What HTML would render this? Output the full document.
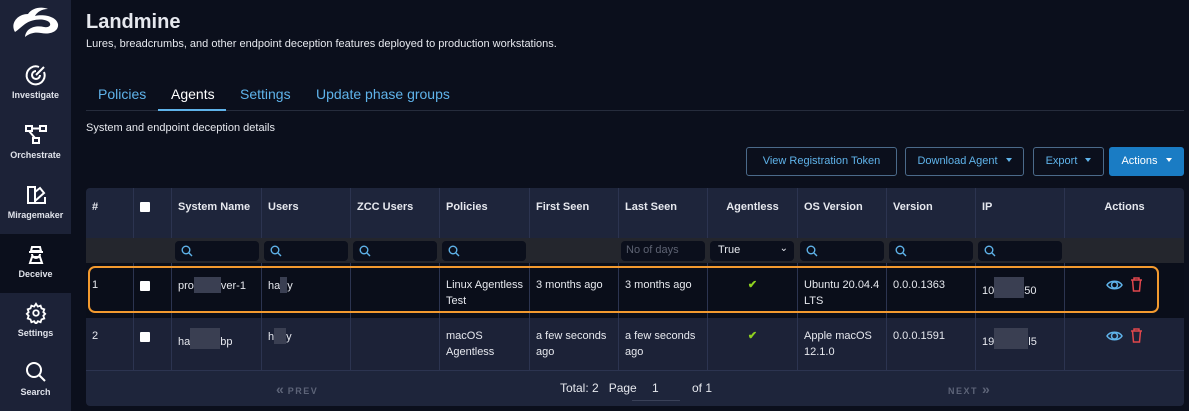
<!DOCTYPE html>
<html><head><meta charset="utf-8"><style>
*{box-sizing:border-box;margin:0;padding:0}
body{width:1189px;height:411px;background:#0b0f1c;font-family:"Liberation Sans",sans-serif;color:#e6e8ee;position:relative;overflow:hidden}
.sb{position:absolute;left:0;top:0;width:71px;height:411px;background:#1c2237}
.it{position:absolute;left:0;width:71px;text-align:center;font-size:9px;font-weight:bold;color:#dfe2ea}
.it svg{display:block;margin:0 auto 4px}
.abs{position:absolute}
.tab{position:absolute;top:86px;font-size:14px;color:#5fb3ea}
.btn{position:absolute;top:147px;height:29px;border:1px solid #4b6a8a;border-radius:3px;color:#5fb3ea;font-size:11px;line-height:27px;text-align:center;background:#0b0f1c}
.car{display:inline-block;width:0;height:0;border-left:3px solid transparent;border-right:3px solid transparent;border-top:4px solid currentColor;margin-left:8px;vertical-align:2px}
.tbl{position:absolute;left:86px;top:188px;width:1098px;height:218px;background:#1e253b;border-radius:4px;overflow:hidden}
.r{position:absolute;left:0;width:1098px}
.c{position:absolute;top:0;height:100%;border-right:1px solid #2c3450;font-size:11px;padding:0 6px;line-height:16px}
.hd .c{font-weight:bold;padding-top:11px}
.f{position:absolute;top:3px;height:20px;background:#0b0f1c;border-radius:4px}
.mask{display:inline-block;background:#3a3f52;height:16px;vertical-align:-4px}
.chk{position:absolute;width:10px;height:10px;background:#fff;border-radius:1px}
</style></head><body>
<div class="sb">
 <svg class="abs" style="left:11px;top:6px" width="50" height="32" viewBox="0 0 50 32"><path d="M4 26 C-1 18 6 8 17 8 C21 2 30 0 37 3 C31 3 26 6 24 10 C32 8 45 10 47 18 C48 25 40 29 30 27 C24 26 19 27 14 31 C15 22 24 19 33 21 C38 22 41 19 38 16 C33 12 21 13 14 18 C10 21 7 24 4 26Z" fill="#fff"/></svg>
 <div class="it" style="top:64px"><svg width="22" height="22" viewBox="0 0 22 22" fill="none" stroke="#fff" stroke-width="2"><path d="M19 8a9 9 0 1 1-5-5"/><path d="M15 11a4 4 0 1 1-4-4"/><path d="M11 11l8-8"/></svg>Investigate</div>
 <div class="it" style="top:124px"><svg width="24" height="22" viewBox="0 0 24 22" fill="none" stroke="#fff" stroke-width="2"><rect x="2" y="2" width="6" height="5"/><rect x="16" y="2" width="6" height="5"/><rect x="9" y="14" width="6" height="5"/><path d="M8 4.5h8M5 7l6 7"/></svg>Orchestrate</div>
 <div class="it" style="top:184px"><svg width="22" height="22" viewBox="0 0 22 22" fill="none" stroke="#fff" stroke-width="2"><rect x="3" y="3" width="7" height="16"/><path d="M10 8l5-4 4 5-9 8M10 19h10v-6"/></svg>Miragemaker</div>
 <div class="abs" style="left:0;top:234px;width:71px;height:59px;background:#0b0f1c"></div>
 <div class="it" style="top:243px"><svg width="22" height="22" viewBox="0 0 22 22" fill="none" stroke="#fff" stroke-width="2"><path d="M7 4h8l1 4H6zM4 9h14M7 11a4 4 0 0 0 8 0M5 20l2-6h8l2 6z"/></svg>Deceive</div>
 <div class="it" style="top:302px"><svg width="22" height="22" viewBox="0 0 24 24" fill="none" stroke="#fff" stroke-width="2"><circle cx="12" cy="12" r="3"/><path d="M12 2l2 3 3-1 1 3 3 1-1 3 2 2-2 2 1 3-3 1-1 3-3-1-2 3-2-3-3 1-1-3-3-1 1-3-2-2 2-2-1-3 3-1 1-3 3 1z"/></svg>Settings</div>
 <div class="it" style="top:361px"><svg width="22" height="22" viewBox="0 0 22 22" fill="none" stroke="#fff" stroke-width="2"><circle cx="9" cy="9" r="7"/><path d="M14 14l6 6"/></svg>Search</div>
</div>
<div class="abs" style="left:86px;top:11px;font-size:20px;font-weight:bold">Landmine</div>
<div class="abs" style="left:86px;top:38px;font-size:11px">Lures, breadcrumbs, and other endpoint deception features deployed to production workstations.</div>
<div class="tab" style="left:98px">Policies</div>
<div class="tab" style="left:171px;color:#fff">Agents</div>
<div class="tab" style="left:240px">Settings</div>
<div class="tab" style="left:316px">Update phase groups</div>
<div class="abs" style="left:86px;top:110px;width:1098px;height:1px;background:#262c3c"></div>
<div class="abs" style="left:158px;top:109px;width:68px;height:2px;background:#5fb3ea"></div>
<div class="abs" style="left:86px;top:122px;font-size:11px">System and endpoint deception details</div>
<div class="btn" style="left:746px;width:151px">View Registration Token</div>
<div class="btn" style="left:905px;width:119px">Download Agent<span class="car"></span></div>
<div class="btn" style="left:1033px;width:71px">Export<span class="car"></span></div>
<div class="btn" style="left:1109px;width:75px;background:#1a7cc4;border-color:#1a7cc4;color:#fff">Actions<span class="car"></span></div>

<div class="tbl">
 <div class="r hd" style="top:0;height:50px">
  <div class="c" style="left:0;width:48px">#</div>
  <div class="c" style="left:48px;width:38px"><span class="chk" style="left:6px;top:14px"></span></div>
  <div class="c" style="left:86px;width:90px">System Name</div>
  <div class="c" style="left:176px;width:89px">Users</div>
  <div class="c" style="left:265px;width:89px">ZCC Users</div>
  <div class="c" style="left:354px;width:90px">Policies</div>
  <div class="c" style="left:444px;width:89px">First Seen</div>
  <div class="c" style="left:533px;width:89px">Last Seen</div>
  <div class="c" style="left:622px;width:90px;text-align:center">Agentless</div>
  <div class="c" style="left:712px;width:89px">OS Version</div>
  <div class="c" style="left:801px;width:89px">Version</div>
  <div class="c" style="left:890px;width:89px">IP</div>
  <div class="c" style="left:979px;width:119px;text-align:center;border:0">Actions</div>
 </div>
 <div class="r" style="top:50px;height:25px;background:#24262d">
  <div class="f" style="left:89px;width:84px"></div><div class="f" style="left:178px;width:84px"></div><div class="f" style="left:267px;width:84px"></div><div class="f" style="left:356px;width:84px"></div>
  <div class="f" style="left:535px;width:84px;font-size:11px;color:#5d6272;padding:3px 5px">No of days</div>
  <div class="f" style="left:624px;width:84px;font-size:11px;padding:3px 8px">True<span style="position:absolute;right:6px;top:2px;font-size:10px">⌄</span></div>
  <div class="f" style="left:714px;width:84px"></div><div class="f" style="left:803px;width:84px"></div><div class="f" style="left:892px;width:84px"></div>
  <svg class="abs" style="left:95px;top:7px" width="12" height="12"><circle cx="5" cy="5" r="3.8" fill="none" stroke="#5fb3ea" stroke-width="1.4"/><path d="M8 8l3 3" stroke="#5fb3ea" stroke-width="1.4"/></svg>
  <svg class="abs" style="left:184px;top:7px" width="12" height="12"><circle cx="5" cy="5" r="3.8" fill="none" stroke="#5fb3ea" stroke-width="1.4"/><path d="M8 8l3 3" stroke="#5fb3ea" stroke-width="1.4"/></svg>
  <svg class="abs" style="left:273px;top:7px" width="12" height="12"><circle cx="5" cy="5" r="3.8" fill="none" stroke="#5fb3ea" stroke-width="1.4"/><path d="M8 8l3 3" stroke="#5fb3ea" stroke-width="1.4"/></svg>
  <svg class="abs" style="left:362px;top:7px" width="12" height="12"><circle cx="5" cy="5" r="3.8" fill="none" stroke="#5fb3ea" stroke-width="1.4"/><path d="M8 8l3 3" stroke="#5fb3ea" stroke-width="1.4"/></svg>
  <svg class="abs" style="left:720px;top:7px" width="12" height="12"><circle cx="5" cy="5" r="3.8" fill="none" stroke="#5fb3ea" stroke-width="1.4"/><path d="M8 8l3 3" stroke="#5fb3ea" stroke-width="1.4"/></svg>
  <svg class="abs" style="left:809px;top:7px" width="12" height="12"><circle cx="5" cy="5" r="3.8" fill="none" stroke="#5fb3ea" stroke-width="1.4"/><path d="M8 8l3 3" stroke="#5fb3ea" stroke-width="1.4"/></svg>
  <svg class="abs" style="left:898px;top:7px" width="12" height="12"><circle cx="5" cy="5" r="3.8" fill="none" stroke="#5fb3ea" stroke-width="1.4"/><path d="M8 8l3 3" stroke="#5fb3ea" stroke-width="1.4"/></svg>
 </div>
 <div class="r" style="top:75px;height:55px;background:#0a0e1a">
  <div class="c" style="left:0;width:48px;padding-top:14px">1</div>
  <div class="c" style="left:48px;width:38px"><span class="chk" style="left:6px;top:18px"></span></div>
  <div class="c" style="left:86px;width:90px;padding-top:14px">pro<span class="mask" style="width:27px"></span>ver-1</div>
  <div class="c" style="left:176px;width:89px;padding-top:14px">ha<span class="mask" style="width:7px"></span>y</div>
  <div class="c" style="left:265px;width:89px"></div>
  <div class="c" style="left:354px;width:90px;padding:14px 2px 0 6px;white-space:nowrap">Linux Agentless<br>Test</div>
  <div class="c" style="left:444px;width:89px;padding-top:14px">3 months ago</div>
  <div class="c" style="left:533px;width:89px;padding-top:14px">3 months ago</div>
  <div class="c" style="left:622px;width:90px;padding-top:14px;text-align:center;color:#8fd11f;font-weight:bold">✔</div>
  <div class="c" style="left:712px;width:89px;padding-top:14px">Ubuntu 20.04.4 LTS</div>
  <div class="c" style="left:801px;width:89px;padding-top:14px">0.0.0.1363</div>
  <div class="c" style="left:890px;width:89px;padding-top:14px">10<span class="mask" style="width:30px;height:21px"></span>50</div>
  <div class="c" style="left:979px;width:119px;border:0"></div>
 </div>
 <div class="r" style="top:130px;height:52px;background:#1c2237">
  <div class="c" style="left:0;width:48px;padding-top:10px">2</div>
  <div class="c" style="left:48px;width:38px"><span class="chk" style="left:6px;top:14px"></span></div>
  <div class="c" style="left:86px;width:90px;padding-top:10px">ha<span class="mask" style="width:30px;height:21px"></span>bp</div>
  <div class="c" style="left:176px;width:89px;padding-top:10px">h<span class="mask" style="width:12px"></span>y</div>
  <div class="c" style="left:265px;width:89px"></div>
  <div class="c" style="left:354px;width:90px;padding-top:10px">macOS Agentless</div>
  <div class="c" style="left:444px;width:89px;padding-top:10px">a few seconds ago</div>
  <div class="c" style="left:533px;width:89px;padding-top:10px">a few seconds ago</div>
  <div class="c" style="left:622px;width:90px;padding-top:10px;text-align:center;color:#8fd11f;font-weight:bold">✔</div>
  <div class="c" style="left:712px;width:89px;padding-top:10px">Apple macOS 12.1.0</div>
  <div class="c" style="left:801px;width:89px;padding-top:10px">0.0.0.1591</div>
  <div class="c" style="left:890px;width:89px;padding-top:10px">19<span class="mask" style="width:34px;height:21px"></span>l5</div>
  <div class="c" style="left:979px;width:119px;border:0"></div>
 </div>
 <div class="r" style="top:182px;height:36px;border-top:1px solid #2c3450">
  <div class="abs" style="left:190px;top:10px;font-size:9px;letter-spacing:1.5px;color:#5d6478;font-weight:bold"><span style="font-size:14px;letter-spacing:0">«</span> PREV</div>
  <div class="abs" style="left:474px;top:10px;font-size:12px">Total: 2&nbsp;&nbsp; Page</div>
  <div class="abs" style="left:546px;top:4px;width:48px;height:26px;border-bottom:1px solid #3a4158;font-size:12px;padding:6px 0 0 20px">1</div>
  <div class="abs" style="left:606px;top:10px;font-size:12px">of 1</div>
  <div class="abs" style="left:862px;top:10px;font-size:9px;letter-spacing:1.5px;color:#5d6478;font-weight:bold">NEXT <span style="font-size:14px;letter-spacing:0">»</span></div>
 </div>
</div>
<svg class="abs" style="left:1106px;top:278px" width="17" height="14" viewBox="0 0 17 14" fill="none" stroke="#5fb3ea" stroke-width="1.5"><path d="M1 7C4 2 13 2 16 7C13 12 4 12 1 7Z"/><circle cx="8.5" cy="7" r="3"/></svg>
<svg class="abs" style="left:1130px;top:277px" width="13" height="15" viewBox="0 0 13 15" fill="none" stroke="#e0474c" stroke-width="1.5"><path d="M1 3h11M4 3V1h5v2M2.5 3l1 11h6l1-11"/></svg>
<svg class="abs" style="left:1106px;top:329px" width="17" height="14" viewBox="0 0 17 14" fill="none" stroke="#5fb3ea" stroke-width="1.5"><path d="M1 7C4 2 13 2 16 7C13 12 4 12 1 7Z"/><circle cx="8.5" cy="7" r="3"/></svg>
<svg class="abs" style="left:1130px;top:328px" width="13" height="15" viewBox="0 0 13 15" fill="none" stroke="#e0474c" stroke-width="1.5"><path d="M1 3h11M4 3V1h5v2M2.5 3l1 11h6l1-11"/></svg>
<div class="abs" style="left:88px;top:266px;width:1071px;height:47px;border:2px solid #f39a2f;border-radius:7px"></div>
</body></html>
